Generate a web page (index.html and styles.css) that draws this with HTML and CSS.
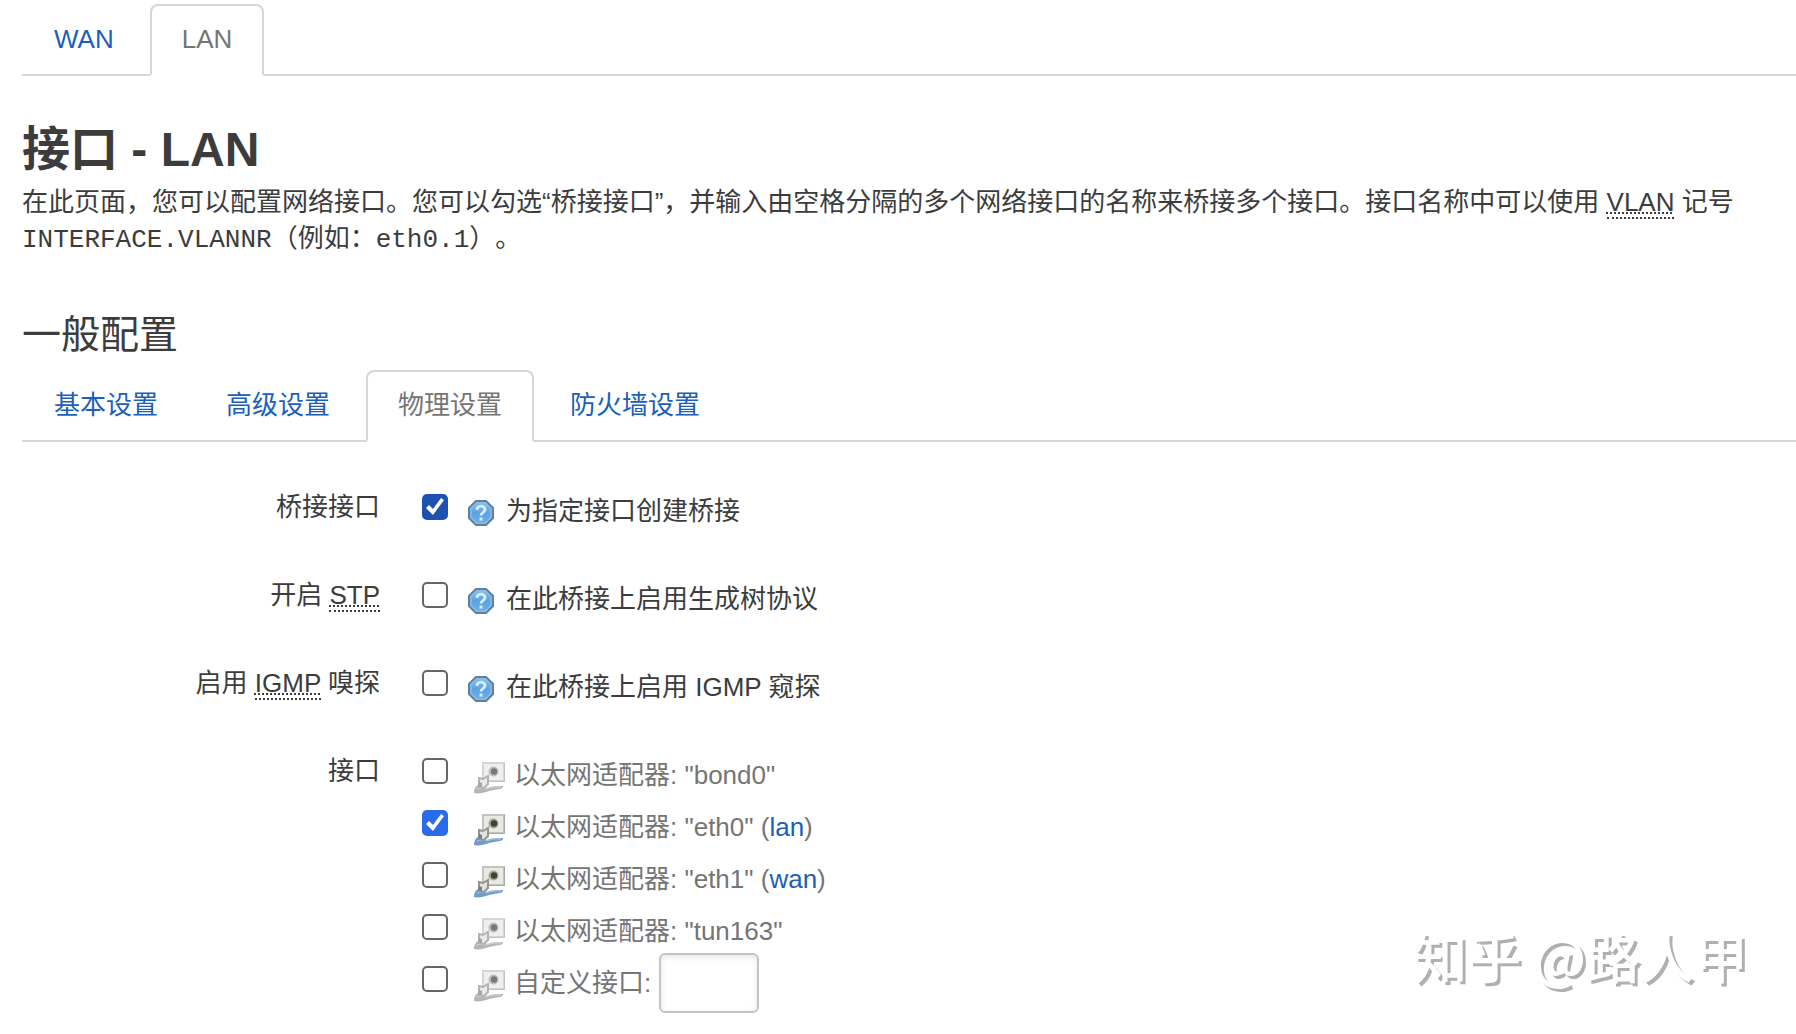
FILE: index.html
```
<!DOCTYPE html>
<html lang="zh-CN">
<head>
  <meta charset="UTF-8" />
  <meta name="viewport" content="width=device-width, initial-scale=1" />
  <title>接口 - LAN</title>
  <link rel="stylesheet" href="styles.css">
</head>
<body>
  <!-- Shared icons -->
  <svg class="sprite" aria-hidden="true">
    <defs>
      <linearGradient id="helpFill" x1="0" y1="0" x2="0" y2="1">
        <stop offset="0" stop-color="#8fc4ee" />
        <stop offset="0.5" stop-color="#5ba3df" />
        <stop offset="1" stop-color="#6fb2e6" />
      </linearGradient>
      <symbol id="help" viewBox="0 0 26 26">
        <path d="M8 1h10l7 7v10l-7 7H8l-7-7V8z" fill="url(#helpFill)" stroke="#5f7f9c" stroke-width="2" />
        <path d="M8.500 3h9l5.500 5.500v9l-5.500 5.500h-9L3 17.500v-9z" fill="none" stroke="#86bdea" stroke-width="1.500" />
        <path d="M9 10c0-5 8-5 8-.5 0 3-4 3-4 6" fill="none" stroke="#d9ecfb" stroke-width="2.800" />
        <rect x="11.500" y="17.500" width="3" height="3" fill="#d9ecfb" />
      </symbol>
      <symbol id="port" viewBox="0 0 32 32">
        <rect x="9" y="1" width="21" height="18" fill="#e9e9e5" stroke="#c4c4be" stroke-width="2" />
        <path d="M9 19.500h21.500V1" fill="none" stroke="#a9a9a0" stroke-width="1" />
        <circle cx="19.500" cy="9.500" r="5" fill="#a3a594" />
        <circle cx="20" cy="9.500" r="3.200" fill="#3f4236" />
        <path d="M0 30C1 22 6 22 9 25s12-1 20-1c1 4-8 3-14 5s-10 3-15 2z" fill="#6f9ccc" />
        <path d="M3 27c4-3 7 1 12-1s8-1 12-1" fill="none" stroke="#9dbfe4" stroke-width="1.500" />
        <path d="M5 16l4 1 5-3v8l-4 4-5-1z" fill="#e2e2de" stroke="#94948e" stroke-width="2" />
        <path d="M5 20l3 1v4l-4-1z" fill="#6d7f92" />
      </symbol>
    </defs>
  </svg>

  <ul class="tabs">
    <li><a href="#wan">WAN</a></li>
    <li class="active"><a href="#lan">LAN</a></li>
  </ul>

  <h2>接口 - LAN</h2>
  <p class="descr">在此页面，您可以配置网络接口。您可以勾选“桥接接口”，并输入由空格分隔的多个网络接口的名称来桥接多个接口。接口名称中可以使用 <abbr>VLAN</abbr> 记号 <samp>INTERFACE.VLANNR</samp>（例如：<samp>eth0.1</samp>）。</p>

  <form>
    <h3>一般配置</h3>
    <ul class="tabs">
      <li><a href="#general">基本设置</a></li>
      <li><a href="#advanced">高级设置</a></li>
      <li class="active"><a href="#physical">物理设置</a></li>
      <li><a href="#firewall">防火墙设置</a></li>
    </ul>

    <div class="values">
      <div class="value">
        <label class="title" for="bridge">桥接接口</label>
        <div class="field">
          <input type="checkbox" class="hover" id="bridge" checked />
          <svg class="help"><use href="#help" /></svg>
          <span>为指定接口创建桥接</span>
        </div>
      </div>
      <div class="value">
        <label class="title" for="stp">开启 <abbr>STP</abbr></label>
        <div class="field">
          <input type="checkbox" id="stp" />
          <svg class="help"><use href="#help" /></svg>
          <span>在此桥接上启用生成树协议</span>
        </div>
      </div>
      <div class="value">
        <label class="title" for="igmp">启用 <abbr>IGMP</abbr> 嗅探</label>
        <div class="field">
          <input type="checkbox" id="igmp" />
          <svg class="help"><use href="#help" /></svg>
          <span>在此桥接上启用 IGMP 窥探</span>
        </div>
      </div>
      <div class="value">
        <span class="title">接口</span>
        <ul class="ports">
          <li class="field">
            <input type="checkbox" id="bond0" />
            <svg class="port off"><use href="#port" /></svg>
            <label for="bond0">以太网适配器: "bond0"</label>
          </li>
          <li class="field">
            <input type="checkbox" id="eth0" checked />
            <svg class="port"><use href="#port" /></svg>
            <label for="eth0">以太网适配器: "eth0" (<a href="#lan">lan</a>)</label>
          </li>
          <li class="field">
            <input type="checkbox" id="eth1" />
            <svg class="port"><use href="#port" /></svg>
            <label for="eth1">以太网适配器: "eth1" (<a href="#wan">wan</a>)</label>
          </li>
          <li class="field">
            <input type="checkbox" id="tun163" />
            <svg class="port off"><use href="#port" /></svg>
            <label for="tun163">以太网适配器: "tun163"</label>
          </li>
          <li class="field">
            <input type="checkbox" id="custom" aria-label="自定义接口" />
            <svg class="port off"><use href="#port" /></svg>
            <label for="customName">自定义接口:</label>
            <input type="text" id="customName" />
          </li>
        </ul>
      </div>
    </div>
  </form>

  <div class="watermark">知乎 @路人甲</div>
</body>
</html>
```

FILE: styles.css
```
* {
  box-sizing: border-box;
}
body {
  margin: 0;
  padding: 4px 0 24px 22px;
  font-family: "Liberation Sans", "Noto Sans CJK SC", sans-serif;
  font-size: 26px;
  line-height: 36px;
  color: #3c3c3c;
  background: #fff;
  text-spacing-trim: space-all;
}
a {
  color: #1c5fb8;
  text-decoration: none;
}
ul {
  list-style: none;
  margin: 0;
  padding: 0;
}
.sprite {
  position: absolute;
  width: 0;
  height: 0;
}

/* Tabs */
.tabs {
  display: flex;
  gap: 4px;
  border-bottom: 2px solid #d6d6d6;
}
.tabs a {
  display: block;
  margin-bottom: -2px;
  padding: 0 30px 2px;
  line-height: 66px;
  border: 2px solid transparent;
  border-radius: 8px 8px 0 0;
}
.tabs .active a {
  color: #757575;
  background: #fff;
  border-color: #d6d6d6;
  border-bottom-color: #fff;
}

h2 {
  margin: 40px 0 0;
  font-size: 48px;
  line-height: 68px;
}
h3 {
  margin: 42px 0 0;
  font-size: 39px;
  font-weight: normal;
  line-height: 70px;
}
.descr {
  margin: 0;
  padding-right: 22px;
}
samp {
  font-family: "Liberation Mono", monospace;
  font-size: 26px;
}
abbr {
  text-decoration: underline dotted 2px;
  text-underline-offset: 1px;
  border-bottom: 2px dotted #3c3c3c;
}

/* Form rows */
.values {
  display: flex;
  flex-direction: column;
  gap: 36px;
  margin-top: 43px;
}
.value {
  display: flex;
  gap: 42px;
}
.title {
  flex: 0 0 358px;
  padding-top: 4px;
  text-align: right;
}
.field {
  display: flex;
  align-items: center;
  height: 52px;
}
.ports {
  color: #757575;
}
input[type="checkbox"] {
  appearance: none;
  flex: none;
  width: 26px;
  height: 26px;
  margin: 0 0 8px;
  border: 2px solid #666;
  border-radius: 5px;
  background: #fff;
}
input[type="checkbox"]:checked {
  border: none;
  background: #2a6bea;
}
input[type="checkbox"].hover:checked {
  background: #1d52b0;
}
input[type="checkbox"]:checked::before {
  content: "";
  display: block;
  width: 26px;
  height: 26px;
  background: #fff;
  clip-path: polygon(4px 14px, 7px 11px, 11px 15px, 19px 4px, 22px 6px, 11px 21px);
}
input[type="text"] {
  width: 100px;
  height: 60px;
  margin-left: 8px;
  padding: 8px;
  font: inherit;
  color: #757575;
  border: 2px solid #c4c4c4;
  border-radius: 6px;
  box-shadow: inset 0 2px 6px rgba(0, 0, 0, 0.1);
}
.help {
  width: 26px;
  height: 26px;
  margin: 4px 12px 0 20px;
}
.port {
  width: 32px;
  height: 32px;
  margin: 6px 8px 0 26px;
}
.port.off {
  filter: grayscale(1);
  opacity: 0.7;
}

.watermark {
  position: absolute;
  right: 48px;
  bottom: 60px;
  font-family: "Noto Sans CJK SC", sans-serif;
  font-size: 54px;
  font-weight: 500;
  line-height: 36px;
  color: #fff;
  text-shadow: 3px 3px 0 #b0b0b0;
}
```
